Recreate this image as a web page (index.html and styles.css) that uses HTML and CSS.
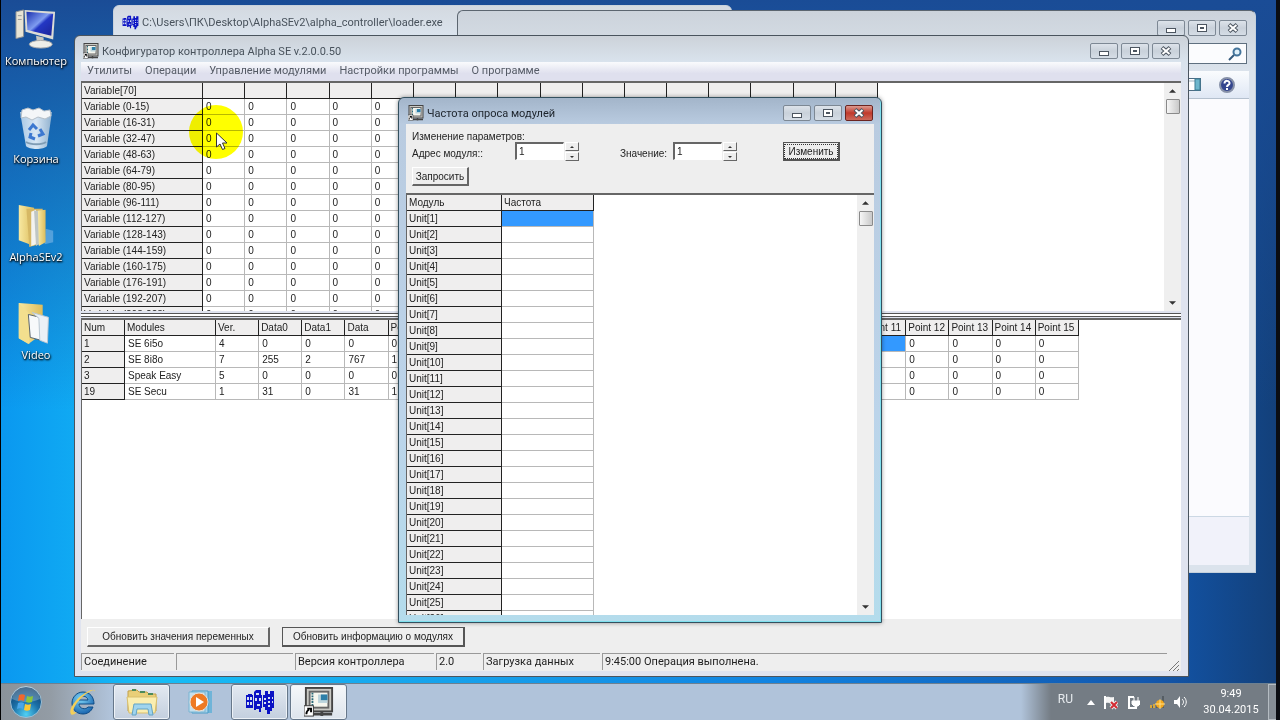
FILE: index.html
```html
<!DOCTYPE html>
<html lang="ru">
  <head>
    <meta charset="UTF-8" />
    <title>Конфигуратор контроллера Alpha SE v.2.0.0.50</title>
    <link rel="stylesheet" href="styles.css">
  </head>

  <body>
    <svg class="defs" width="0" height="0">
      <defs>
        <linearGradient id="gScreen" x1="0" y1="0" x2="1" y2="1">
          <stop offset="0" stop-color="#1a2fae" /><stop offset=".45" stop-color="#7f9cf0" /><stop offset=".55" stop-color="#2337c4" /><stop offset="1" stop-color="#1b2496" />
        </linearGradient>
        <linearGradient id="gFolder" x1="0" y1="0" x2="1" y2="0">
          <stop offset="0" stop-color="#f8e9a2" /><stop offset="1" stop-color="#dcbc5c" />
        </linearGradient>
        <linearGradient id="gBin" x1="0" y1="0" x2="1" y2="0">
          <stop offset="0" stop-color="#b9d3ea" /><stop offset=".5" stop-color="#eef5fb" /><stop offset="1" stop-color="#9db9d2" />
        </linearGradient>
        <radialGradient id="gOrb" cx=".5" cy=".9" r=".9">
          <stop offset="0" stop-color="#4fd0f4" /><stop offset=".5" stop-color="#1a6ea6" /><stop offset="1" stop-color="#0d3a66" />
        </radialGradient>
        <radialGradient id="gIe" cx=".4" cy=".3" r=".8">
          <stop offset="0" stop-color="#7fd6f8" /><stop offset="1" stop-color="#0c57a6" />
        </radialGradient>
      </defs>
      <symbol id="app" viewBox="0 0 32 32">
        <rect x="2" y="1" width="28" height="25" fill="#c9c9c4" stroke="#444" stroke-width="2" />
        <rect x="6" y="5" width="20" height="17" fill="#f6f6ee" stroke="#666" stroke-width="2" />
        <path d="M9 6v14" stroke="#2c6a7a" stroke-width="2" stroke-dasharray="2 1" />
        <rect x="15" y="8" width="10" height="9" fill="#bcd4dc" /><rect x="18" y="8" width="7" height="6" fill="#2d7fa8" />
        <path d="M10 29h20M19 26v5" stroke="#444" stroke-width="3" />
        <rect x="0" y="20" width="10" height="11" fill="#fff" stroke="#333" />
        <path d="M2.500 29c0-3 1-4 3-5M3.500 23h4v4" fill="none" stroke="#000" stroke-width="2" />
      </symbol>
      <symbol id="city" viewBox="0 0 30 26">
        <path fill="#0a12c4" d="M1 6h2V5h4v1h1v13H1zM9 3l2-2h5v5h1v13h-1v4h-2v-3h-3v1H9zM18 6h2V2h3v3h2V2h4v17h-2v3h-2v3h-3v-4h-2v-3h-2z" />
        <path fill="#d5dff0" d="M2 8h2v3H2zM5 8h2v3H5zM2 13h2v3H2zM5 13h2v3H5zM11 4h3v2h-3zM10 9h2v3h-2zM14 9h2v3h-2zM12 15h3v2h-3zM19 9h2v2h-2zM23 8h2v2h-2zM27 8h1v2h-1zM19 13h2v2h-2zM23 12h2v2h-2zM27 12h1v2h-1zM23 16h2v2h-2z" />
      </symbol>
      <symbol id="min" viewBox="0 0 28 16"><rect x="9.500" y="8.500" width="9" height="4" fill="#fff" stroke="#4c5560" /></symbol>
      <symbol id="max" viewBox="0 0 28 16"><rect x="9.500" y="4.500" width="9" height="7" fill="#fff" stroke="#4c5560" /><rect x="12.500" y="7.500" width="3" height="1" fill="none" stroke="#4c5560" /></symbol>
      <symbol id="close" viewBox="0 0 28 16"><path d="M10 4.500l8 7m0-7l-8 7" stroke="#4c5560" stroke-width="4" /><path d="M10.500 5l7 6m0-6l-7 6" stroke="#fff" stroke-width="2" /></symbol>
      <symbol id="up" viewBox="0 0 8 4"><path d="M0 4l4-4 4 4z" fill="#333" /></symbol>
      <symbol id="down" viewBox="0 0 8 4"><path d="M0 0l4 4 4-4z" fill="#333" /></symbol>
    </svg>

    <div class="desktop">
      <ul class="shortcuts">
        <li><a href="#">
          <svg width="44" height="42" viewBox="0 0 44 44">
            <path d="M1 4l8-2v28l-8 2z" fill="#e8e4d4" stroke="#8b8f92" /><path d="M3 8h4M3 12h4" stroke="#999" />
            <path d="M10 2l32 2-2 29-29-8z" fill="#dcdcd6" /><path d="M12 4l28 2-2 23-25-6z" fill="url(#gScreen)" />
            <path d="M22 29l8 2v6h-7z" fill="#c9c8c0" /><ellipse cx="27" cy="38" rx="12" ry="4" fill="#efeee8" stroke="#aaa" />
          </svg>Компьютер</a></li>
        <li><a href="#">
          <svg width="44" height="44" viewBox="0 0 44 44">
            <path d="M6 6h32l-5 34c-3 4-18 4-21 0z" fill="url(#gBin)" opacity=".9" />
            <path d="M8 4l6-2 5 2 6-2 5 3 6-1 1 6-6 3-7-2-6 3-6-3-5 1z" fill="#f4f6f8" stroke="#b5bfc8" />
            <path d="M15 24l4-5 4 4M26 23l3 5-5 2M21 33l-5-2 1-4" fill="none" stroke="#3c78d0" stroke-width="3" />
            <path d="M12 36c5 3 16 3 20 0" fill="none" stroke="#7f9cb4" stroke-width="2" />
          </svg>Корзина</a></li>
        <li><a href="#">
          <svg width="46" height="44" viewBox="0 0 44 46">
            <path d="M32 26l8 2v12l-9 2z" fill="#7fb8e6" opacity=".6" />
            <path d="M4 1l16 3v40L4 38z" fill="url(#gFolder)" /><path d="M12 5l17 0v36l-14 4z" fill="#d6b864" />
            <path d="M17 8l5-2v36l-5 2z" fill="#f3f3f0" /><path d="M20 7l10 0v32l-8 5z" fill="#bfc6c4" /><path d="M24 7l8-1v34l-7 4z" fill="url(#gFolder)" />
          </svg>AlphaSEv2</a></li>
        <li><a href="#">
          <svg width="46" height="44" viewBox="0 0 44 46">
            <path d="M4 1l25 2v30L14 44 4 38z" fill="url(#gFolder)" /><path d="M4 1l11 11v32L4 38z" fill="#f3df8e" />
            <path d="M14 13l12 3 1 24-11-3z" fill="#f7f9fb" stroke="#54606a" /><path d="M18 11l17 5-1 27-8-3-1-23z" fill="#eaf0f6" stroke="#b9c6d2" />
          </svg>Video</a></li>
      </ul>

      <section class="window console">
        <header class="title"><svg width="17" height="15"><use href="#city" /></svg><h2>C:\Users\ПК\Desktop\AlphaSEv2\alpha_controller\loader.exe</h2></header>
      </section>

      <section class="window explorer">
        <header class="title"><h2></h2>
          <button aria-label="Свернуть"><svg><use href="#min" /></svg></button>
          <button aria-label="Развернуть"><svg><use href="#max" /></svg></button>
          <button aria-label="Закрыть"><svg><use href="#close" /></svg></button>
        </header>
        <div class="search"><input type="search" aria-label="Поиск">
          <svg width="14" height="14" viewBox="0 0 14 14"><circle cx="9" cy="5" r="3.500" fill="#dff0fa" stroke="#44759c" stroke-width="2" /><path d="M6 8l-5 5" stroke="#33597c" stroke-width="2" /></svg>
        </div>
        <div class="tools">
          <svg width="18" height="14" viewBox="0 0 18 14"><rect x=".500" y=".500" width="17" height="12" fill="#fff" stroke="#4c6c84" /><path d="M1 3h11" stroke="#9fb3c2" /><rect x="12" y="1" width="5" height="11" fill="#6db6cc" stroke="#3c7c94" /></svg>
          <svg width="16" height="16" viewBox="0 0 16 16"><circle cx="8" cy="8" r="7" fill="#34468e" stroke="#8791a8" stroke-width="2" /><path d="M5.500 6.500c0-4 5.500-3 5 0-.3 1.500-2.500 1.500-2.500 3.500M8 11v2" fill="none" stroke="#fff" stroke-width="2" /></svg>
        </div>
        <div class="files"></div>
        <div class="details"></div>
      </section>

      <section class="window main">
        <header class="title"><svg width="16" height="16"><use href="#app" /></svg><h1>Конфигуратор контроллера Alpha SE v.2.0.0.50</h1>
          <button aria-label="Свернуть"><svg><use href="#min" /></svg></button>
          <button aria-label="Развернуть"><svg><use href="#max" /></svg></button>
          <button aria-label="Закрыть"><svg><use href="#close" /></svg></button>
        </header>
        <nav class="menu">
          <a href="#">Утилиты</a><a href="#">Операции</a><a href="#">Управление модулями</a><a href="#">Настройки программы</a><a href="#">О программе</a>
        </nav>
        <div class="pane variables">
          <div class="view"><table class="grid" id="vars"></table></div>
          <div class="scroll"><svg width="7" height="4"><use href="#up" /></svg><i class="thumb"></i><svg width="7" height="4"><use href="#down" /></svg></div>
        </div>
        <div class="splitter"></div>
        <div class="pane modules">
          <div class="view"><table class="grid" id="mods"></table></div>
        </div>
        <div class="actions">
          <button class="btn">Обновить значения переменных</button>
          <button class="btn default">Обновить информацию о модулях</button>
        </div>
        <footer class="status">
          <span>Соединение</span><span></span><span>Версия контроллера</span><span>2.0</span><span>Загрузка данных</span><span>9:45:00 Операция выполнена.</span>
          <svg width="10" height="10" viewBox="0 0 10 10"><path d="M0 10L10 0M4 10l6-6M8 10l2-2" stroke="#777" /></svg>
        </footer>
      </section>

      <section class="window dialog">
        <header class="title"><svg width="16" height="16"><use href="#app" /></svg><h2>Частота опроса модулей</h2>
          <button aria-label="Свернуть"><svg><use href="#min" /></svg></button>
          <button aria-label="Развернуть"><svg><use href="#max" /></svg></button>
          <button class="red" aria-label="Закрыть"><svg><use href="#close" /></svg></button>
        </header>
        <form class="params">
          <p>Изменение параметров:</p>
          <label for="addr">Адрес модуля::</label>
          <div class="spin"><input id="addr" type="text" value="1">
            <div class="arrows"><button type="button" aria-label="Больше"><svg><use href="#up" /></svg></button><button type="button" aria-label="Меньше"><svg><use href="#down" /></svg></button></div>
          </div>
          <label for="val">Значение:</label>
          <div class="spin"><input id="val" type="text" value="1">
            <div class="arrows"><button type="button" aria-label="Больше"><svg><use href="#up" /></svg></button><button type="button" aria-label="Меньше"><svg><use href="#down" /></svg></button></div>
          </div>
          <button type="button" class="btn default focus"><span>Изменить</span></button>
          <button type="button" class="btn ask">Запросить</button>
        </form>
        <div class="pane">
          <div class="view"><table class="grid" id="units"></table></div>
          <div class="scroll"><svg width="7" height="4"><use href="#up" /></svg><i class="thumb"></i><svg width="7" height="4"><use href="#down" /></svg></div>
        </div>
      </section>

      <div class="halo"></div>
      <svg class="cursor" width="12" height="19" viewBox="0 0 12 19"><path d="M.500 1v14l3.500-3 2.500 5.500 2.500-1-2.500-5.500h4.500z" fill="#fff" stroke="#333" /></svg>
    </div>

    <div class="taskbar">
      <button class="orb" aria-label="Пуск">
        <svg width="34" height="34" viewBox="0 0 34 34"><circle cx="17" cy="17" r="15.500" fill="url(#gOrb)" stroke="#9fc0d4" />
          <path d="M3 14a14 13 0 0 1 28 0c-8 4-20 4-28 0z" fill="#fff" opacity=".25" />
          <path d="M10 10c2-1 4-1 6 0l-1 6c-2-1-4-1-6 0z" fill="#f0682c" /><path d="M18 11c2 1 4 1 6 0l-1 6c-2 1-4 1-6 0z" fill="#8cc63c" />
          <path d="M9 18c2-1 4-1 6 0l-1 6c-2-1-4-1-6 0z" fill="#4aa6e8" /><path d="M16 19c2 1 4 1 6 0l-1 6c-2 1-4 1-6 0z" fill="#fcc934" /></svg>
      </button>
      <button class="task" aria-label="Internet Explorer">
        <svg width="30" height="28" viewBox="0 0 30 28"><path d="M25 19c-2 5-6 7-10 7-7 0-11-5-11-11S9 4 15 4c7 0 11 5 11 12H11c0 5 7 6 9 3zM11 12h9c-1-5-8-5-9 0z" fill="url(#gIe)" stroke="#0e4c86" />
          <path d="M27 4c1-3-3-3-8 0C9 9 0 21 3 26c1 2 4 0 6-2-9 3 1-15 14-21 2-1 4-1 4 1z" fill="#f4cf58" /></svg>
      </button>
      <button class="task open" aria-label="Проводник">
        <svg width="32" height="28" viewBox="0 0 32 28"><path d="M2 3l9-1 2 2 8 0 2 2 7 0v17H2z" fill="#e9cf78" stroke="#c2a04a" />
          <path d="M6 2h4M14 4h5M22 6h5" stroke="#4b8a5a" stroke-width="2" /><path d="M1 9h30l-2 16H3z" fill="#faeeb0" stroke="#d9bf6c" />
          <path d="M6 27l2-11h17l2 11h-4l-1-6H11l-1 6z" fill="#9fd4ee" stroke="#63a3c4" /></svg>
      </button>
      <button class="task" aria-label="Проигрыватель">
        <svg width="26" height="26" viewBox="0 0 26 26"><path d="M6 2h18v22H6z" fill="#6fb4d8" /><path d="M4 2h16v22H4z" fill="#a9d4ea" stroke="#4a9cc8" /><path d="M1 3h16v20H1z" fill="#c4e0ee" stroke="#79b4d2" />
          <circle cx="11" cy="13" r="9" fill="#ee7a24" stroke="#e8e0d8" /><path d="M8 8l8 5-8 5z" fill="#fff" /></svg>
      </button>
      <button class="task open" aria-label="loader.exe"><svg width="30" height="26"><use href="#city" /></svg></button>
      <button class="task open active" aria-label="Конфигуратор"><svg width="30" height="30"><use href="#app" /></svg></button>
      <div class="tray">
        <span class="lang">RU</span>
        <svg width="8" height="5" viewBox="0 0 8 5"><path d="M0 5l4-5 4 5z" fill="#fff" /></svg>
        <svg width="14" height="15" viewBox="0 0 14 15"><path d="M1 1v13" stroke="#fff" stroke-width="2" /><path d="M2 2c3-1 4 1 8 0v6c-3 1-5-1-8 0z" fill="#f4f4f4" /><path d="M7 7l6 6m0-6l-6 6" stroke="#e9e9e9" stroke-width="4" /><path d="M7 7l6 6m0-6l-6 6" stroke="#d42c34" stroke-width="2" /></svg>
        <svg width="13" height="15" viewBox="0 0 13 15"><path d="M7 2H2v11h7v-2" fill="none" stroke="#fff" stroke-width="2" /><path d="M7 2v4M11 2v4M5 6h8v3l-2 2H7L5 9zM9 11v3" fill="#fff" stroke="#fff" /></svg>
        <svg width="16" height="14" viewBox="0 0 16 14"><path d="M1 12h3M5 10v3M8 7v6M11 4v9M14 1v12" stroke="#555d63" stroke-width="2" /><path d="M1 10h2v3H1zM4 9h2v4H4z" fill="#d8a83c" /><circle cx="11" cy="9" r="4" fill="#f4a81c" /><path d="M11 4v10M6 9h10" stroke="#ffe08a" /></svg>
        <svg width="14" height="14" viewBox="0 0 14 14"><path d="M0 5h3l3-4v12L3 9H0z" fill="#fff" /><path d="M8 4c2 2 2 4 0 6M10 2c3 3 3 7 0 10" fill="none" stroke="#fff" /></svg>
        <time>9:49<br>30.04.2015</time>
        <button class="peek" aria-label="Свернуть все окна"></button>
      </div>
    </div>

    <script>
      // rows: массив строк, первая ячейка каждой строки фиксированная
      function fill(id, widths, head, rows, selected) {
        var html = '<colgroup>'
        widths.forEach(function (w) {
          html += '<col class="' + w + '">'
        })
        html += '</colgroup><thead><tr>'
        head.forEach(function (t) {
          html += '<th>' + t + '</th>'
        })
        html += '</tr></thead><tbody>'
        rows.forEach(function (row, r) {
          html += '<tr>'
          row.forEach(function (t, c) {
            if (c === 0) html += '<th>' + t + '</th>'
            else html += (r === 0 && c === selected ? '<td class="sel">' : '<td>') + t + '</td>'
          })
          html += '</tr>'
        })
        document.querySelector('#' + id).innerHTML = html + '</tbody>'
      }

      function list(n, value) {
        var arr = []
        for (var i = 0; i < n; i++) arr.push(value)
        return arr
      }

      var vars = []
      for (var i = 0; i < 14; i++) {
        vars.push(['Variable (' + i * 16 + '-' + (i * 16 + 15) + ')'].concat(list(16, 0)))
      }
      fill('vars', ['name'].concat(list(16, '')), ['Variable[70]'].concat(list(16, '')), vars)

      var head = ['Num', 'Modules', 'Ver.', 'Data0', 'Data1', 'Data']
      for (var i = 0; i < 16; i++) head.push('Point ' + i)
      var mods = [
        [1, 'SE 6i5o', 4, 0, 0, 0, 0],
        [2, 'SE 8i8o', 7, 255, 2, 767, 1],
        [3, 'Speak Easy', 5, 0, 0, 0, 0],
        [19, 'SE Secu', 1, 31, 0, 31, 1]
      ].map(function (row) {
        return row.concat(list(15, 0))
      })
      // Point 11 в первой строке выделена
      mods[0][17] = ''
      mods[1][17] = mods[2][17] = mods[3][17] = ''
      fill('mods', ['num', 'module'].concat(list(20, '')), head, mods, 17)

      var units = []
      for (var i = 1; i <= 26; i++) units.push(['Unit[' + i + ']', ''])
      fill('units', ['unit', ''], ['Модуль', 'Частота'], units, 1)
    </script>
  </body>
</html>
```

FILE: styles.css
```css
* {
  box-sizing: border-box;
  padding: 0;
  margin: 0;
}

body {
  display: flex;
  flex-direction: column;
  height: 100vh;
  overflow: hidden;
  border-left: 1px solid #000;
  border-right: 4px solid #0b0d12;
  font-family: Roboto, 'Open Sans', sans-serif;
  font-size: 11px;
  color: #222;
}

ul {
  list-style: none;
}

a {
  color: inherit;
  text-decoration: none;
}

button,
input {
  font: inherit;
  color: inherit;
}

svg {
  display: block;
  flex: none;
}

.defs {
  position: absolute;
}

.desktop {
  flex: 1;
  position: relative;
  background:
    linear-gradient(to bottom, rgba(26, 76, 150, 1) 0, rgba(26, 76, 150, 0) 60%),
    linear-gradient(to right, #0a98f0 0, #16bdf6 12%, #17a8ee 30%, #1184e2 60%, #1257ae 90%, #13407a 100%);
}

/* ярлыки */
.shortcuts {
  display: flex;
  flex-direction: column;
  gap: 36px;
  width: 70px;
  padding-top: 8px;
}

.shortcuts a {
  display: flex;
  flex-direction: column;
  align-items: center;
  height: 62px;
  justify-content: space-between;
  line-height: 18px;
  font-family: 'Open Sans', sans-serif;
  font-size: 11px;
  color: #fff;
  text-shadow: 0 1px 2px #000, 1px 1px 2px #000;
}

/* окна */
.window {
  position: absolute;
  display: flex;
  flex-direction: column;
  border: 1px solid #4a545e;
  border-radius: 6px 6px 0 0;
  background: #dde4ee;
  overflow: hidden;
}

.title {
  display: flex;
  align-items: center;
  gap: 3px;
  height: 26px;
  flex: none;
  padding: 4px 1px 0 2px;
}

.title h1,
.title h2 {
  flex: 1;
  font-size: 11px;
  font-weight: normal;
  color: #48525c;
  white-space: nowrap;
}

.title button {
  width: 28px;
  height: 16px;
  border: 1px solid #7d8894;
  border-radius: 2px;
  background: linear-gradient(#dde3ea, #c9d1da 50%, #d5dde6);
}

.title button svg {
  width: 28px;
  height: 16px;
  margin: -1px;
}

.console {
  left: 112px;
  top: 5px;
  width: 619px;
  height: 200px;
  border-color: #c9d2dc;
  background: linear-gradient(#d3d9e0, #dbe4ee 30px);
}

.console .title {
  padding: 7px 8px 0;
}

.explorer {
  left: 456px;
  top: 10px;
  right: 20px;
  bottom: 110px;
  padding: 2px 6px 7px;
  border-color: #5c6670 #c4d0dc #c4d0dc #5c6670;
  background: linear-gradient(#ccd3db, #dbe3ec 60px);
}

.explorer .title {
  padding-right: 2px;
}

.search {
  display: flex;
  align-items: center;
  align-self: flex-end;
  height: 21px;
  width: 200px;
  margin: 4px 2px 7px;
  padding-right: 4px;
  border: 1px solid #5f7080;
  background: #fbfcfe;
}

.search input {
  flex: 1;
  min-width: 0;
  border: 0;
  outline: 0;
  background: none;
}

.tools {
  display: flex;
  align-items: center;
  justify-content: flex-end;
  gap: 18px;
  height: 28px;
  padding-right: 14px;
  border-bottom: 1px solid #b4c0ce;
  background: linear-gradient(#fafcfe, #dfe7f4);
}

.files {
  flex: 1;
  background: #fbfbfe;
}

.details {
  height: 49px;
  border-top: 1px solid #ccd8e4;
  background: #f1f2fa;
}

.main {
  left: 73px;
  top: 35px;
  right: 87px;
  bottom: 6px;
  padding: 0 7px 5px 6px;
  background: linear-gradient(#ccd2d9, #d9e3ed 26px, #dfe3ef 60px);
}

.main .title {
  padding-right: 1px;
}

.menu {
  display: flex;
  gap: 13px;
  height: 19px;
  flex: none;
  padding-left: 6px;
  line-height: 18px;
  color: #555b66;
  background: linear-gradient(#fafbfd, #dfe0ee 60%);
}

.pane {
  display: flex;
  flex: 1;
  min-height: 0;
  border-top: 2px solid #666;
  border-left: 1px solid #666;
  background: #fff;
}

.variables {
  flex: none;
  height: 230px;
}

.view {
  flex: 1;
  overflow: hidden;
  font-family: 'Liberation Sans', sans-serif;
}

.splitter {
  flex: none;
  height: 4px;
  margin: 2px 0 1px;
  border: solid #555;
  border-width: 1px 0;
  background: #fff;
}

.grid {
  table-layout: fixed;
  border-spacing: 0;
  font-size: 10px;
}

.grid th,
.grid td {
  height: 16px;
  padding: 0 0 0 3px;
  line-height: 15px;
  font-weight: normal;
  text-align: left;
  white-space: nowrap;
  border-right: 1px solid #b8b8b8;
  border-bottom: 1px solid #b8b8b8;
}

.grid th {
  padding-left: 2px;
  background: #efeeee;
  border-color: #222;
}

.grid .sel {
  background: #3399ff;
}

#vars {
  width: 796px;
}

#mods {
  width: 997px;
}

#units {
  width: 187px;
}

.name {
  width: 121px;
}

.num {
  width: 43px;
}

.module {
  width: 91px;
}

.unit {
  width: 95px;
}

.scroll {
  display: flex;
  flex-direction: column;
  align-items: center;
  width: 17px;
  padding: 6px 0;
  background: #efefef;
}

.thumb {
  width: 14px;
  height: 15px;
  margin: 6px 0 auto;
  border: 1px solid #8a8a8a;
  border-radius: 1px;
  background: linear-gradient(to right, #f6f6f6, #c9c9c9);
}

.actions {
  display: flex;
  align-items: center;
  gap: 12px;
  height: 33px;
  flex: none;
  padding: 2px 6px 0;
  background: #eee;
}

.btn {
  height: 20px;
  padding: 0 13px;
  border: 1px solid #fff;
  border-right: 2px solid #666;
  border-bottom: 2px solid #666;
  background: #eee;
  font-family: 'Liberation Sans', sans-serif;
  font-size: 10px;
  white-space: nowrap;
}

.actions .btn {
  width: 183px;
  padding: 0;
}

.btn.default {
  border-color: #555;
}

.status {
  display: grid;
  grid-template-columns: 93px 117px 139px 45px 117px 1fr 12px;
  column-gap: 2px;
  align-items: center;
  height: 19px;
  flex: none;
  background: #eee;
}

.status span {
  height: 17px;
  padding-left: 2px;
  line-height: 16px;
  border-top: 1px solid #999;
  border-left: 1px solid #999;
  white-space: nowrap;
}

.status svg {
  align-self: end;
}

.dialog {
  left: 397px;
  top: 97px;
  width: 484px;
  height: 526px;
  padding: 0 7px 7px;
  border-color: #33505f;
  background: linear-gradient(#a3b5ca, #b9cbe0 26px, #bcd4ea 60%, #b4dcec);
  box-shadow: inset -1px -1px #7fe0ee, 0 0 4px rgba(0, 0, 0, .4);
}

.dialog .title {
  padding-top: 4px;
}

.dialog h2 {
  color: #1c232b;
}

.dialog .title .red {
  border-color: #6b2420;
  background: linear-gradient(#dc9a90, #c0392b 50%, #cc6a5c);
}

.params {
  display: grid;
  grid-template-columns: 103px 105px 53px 110px 57px;
  grid-template-rows: 12px 19px 25px;
  padding: 6px 6px 7px;
  background: #eee;
  font-family: 'Liberation Sans', sans-serif;
  font-size: 10px;
}

.params p {
  grid-column: 1 / -1;
  line-height: 14px;
}

.params label {
  align-self: end;
  line-height: 14px;
}

.params .btn {
  height: 19px;
  padding: 0;
}

.params .ask {
  align-self: end;
  width: 57px;
}

.focus span {
  display: block;
  border: 1px dotted #333;
  line-height: 13px;
}

.spin {
  display: flex;
  justify-self: start;
  gap: 1px;
  width: 64px;
}

.spin input {
  width: 49px;
  height: 18px;
  padding: 0 2px;
  border: 1px solid #fff;
  border-top: 2px solid #666;
  border-left: 2px solid #666;
  background: #fff;
}

.arrows {
  display: flex;
  flex-direction: column;
  gap: 1px;
  width: 14px;
}

.arrows button {
  display: flex;
  align-items: center;
  justify-content: center;
  height: 9px;
  border: 1px solid #fff;
  border-right-color: #666;
  border-bottom-color: #666;
  background: #eee;
}

.arrows svg {
  width: 4px;
  height: 2px;
}

/* подсветка курсора */
.halo {
  position: absolute;
  left: 188px;
  top: 105px;
  width: 54px;
  height: 54px;
  border-radius: 50%;
  background: #ff0;
  mix-blend-mode: multiply;
}

.cursor {
  position: absolute;
  left: 215px;
  top: 132px;
}

/* панель задач */
.taskbar {
  display: flex;
  align-items: center;
  height: 37px;
  flex: none;
  gap: 2px;
  border-top: 1px solid #6d8090;
  background: linear-gradient(to right, #8a9299 0, #939ca5 50px, #b0c3da 110px, #b0c3da calc(100% - 255px), #747c84 calc(100% - 225px), #747c84 100%);
}

.orb {
  width: 51px;
  height: 36px;
  padding-left: 8px;
  border: 0;
  background: none;
}

.task {
  display: flex;
  align-items: center;
  justify-content: center;
  width: 57px;
  height: 36px;
  border: 1px solid transparent;
  border-radius: 3px;
  background: none;
}

.task.open {
  border-color: #66778a;
  background: linear-gradient(#e3e9f1, #c3cfde);
  box-shadow: inset 0 0 0 1px #edf2f7;
}

.task.open.active {
  background: linear-gradient(#f6f8fa, #dde4ec);
}

.tray {
  display: flex;
  align-items: center;
  gap: 9px;
  height: 100%;
  margin-left: auto;
  color: #fff;
}

.lang {
  margin: -6px 5px 0 0;
  font-size: 12px;
  color: #e6eaee;
}

.tray time {
  width: 68px;
  text-align: center;
  line-height: 16px;
}

.peek {
  width: 8px;
  height: 36px;
  margin-left: -6px;
  border: 1px solid #b5bcc2;
  border-right: 0;
  background: #858d95;
}
```
